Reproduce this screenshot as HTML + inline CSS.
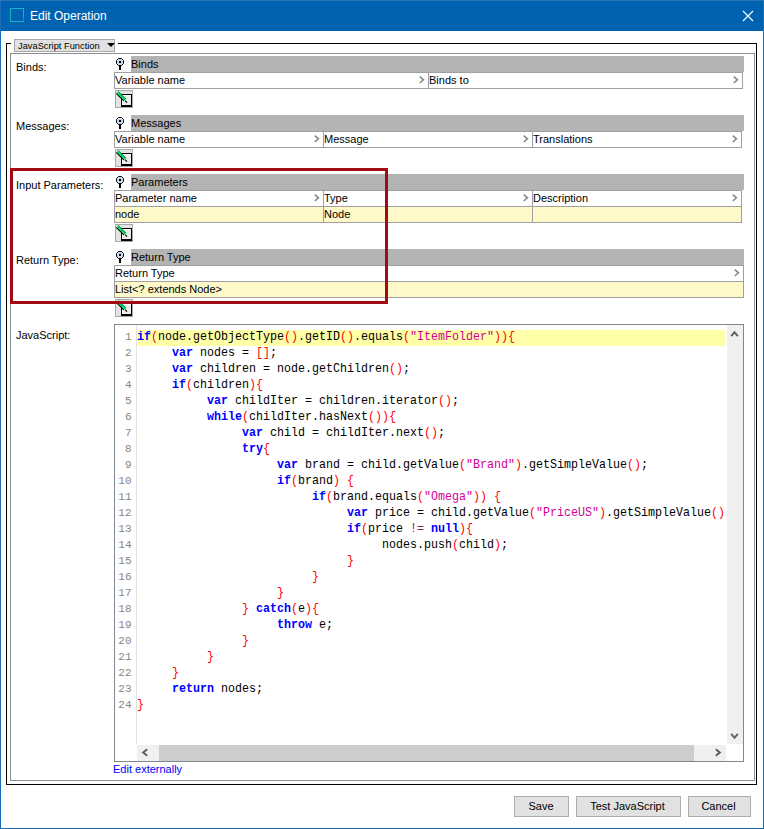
<!DOCTYPE html><html><head><meta charset="utf-8"><style>
html,body{margin:0;padding:0;}
body{width:764px;height:829px;position:relative;overflow:hidden;background:#fff;font-family:'Liberation Sans', sans-serif;}
.b{position:absolute;box-sizing:border-box;}
.t{position:absolute;font-family:'Liberation Sans', sans-serif;font-size:11px;line-height:11px;white-space:pre;}
.code{position:absolute;font-family:'Liberation Mono', monospace;font-size:12.8px;transform:scaleX(0.9115);transform-origin:0 0;line-height:16px;white-space:pre;color:#000;}
.k{color:#0000ff;font-weight:bold;}
.p{color:#ff0000;}
.s{color:#d2009a;}
.o{color:#902030;}
.ln{position:absolute;font-family:'Liberation Mono', monospace;font-size:11px;line-height:16px;color:#858585;text-align:right;width:40px;}
</style></head><body>
<div class="b" style="left:0px;top:0px;width:764px;height:31px;background:#0063b1;"></div><div class="b" style="left:0px;top:0px;width:764px;height:829px;border:1px solid #1a6cb6;border-top:none;"></div><div class="b" style="left:0px;top:0px;width:764px;height:1px;background:#2a74b8;"></div><div class="b" style="left:10px;top:8px;width:14px;height:14px;border:1px solid #14b4c4;"></div><div class="b" style="left:23px;top:18px;width:1px;height:1px;background:#0063b1;"></div><div class="b" style="left:23px;top:20px;width:1px;height:1px;background:#0063b1;"></div><div class="b" style="left:30px;top:8px;font-size:12px;letter-spacing:0px;line-height:16px;color:#fff;font-family:'Liberation Sans', sans-serif;white-space:pre">Edit Operation</div><svg class="b" style="left:742px;top:9.5px" width="12" height="12"><path d="M1,1L11,11M11,1L1,11" stroke="#fff" stroke-width="1.1"/></svg><div class="b" style="left:6px;top:43px;width:751px;height:742px;border:1px solid #000;"></div><div class="b" style="left:10px;top:53px;width:745px;height:728px;border:1px solid #8a8f98;"></div><div class="b" style="left:11px;top:38px;width:107px;height:15px;background:#fff;"></div><div class="b" style="left:10px;top:53px;width:108px;height:1px;background:#8a8f98;"></div><div class="b" style="left:14px;top:39px;width:101px;height:13px;background:#e1e1e1;border:1px solid #a8a8a8;"></div><div class="b" style="left:18px;top:41px;font-size:9.3px;line-height:11px;color:#000;font-family:'Liberation Sans', sans-serif;white-space:pre">JavaScript Function</div><svg class="b" style="left:107px;top:43px" width="8" height="4"><path d="M0,0H8L4,4z" fill="#000"/></svg><div class="t" style="left:16px;top:62px;color:#000;">Binds:</div><svg class="b" style="left:116px;top:58px" width="8" height="12"><path d="M2.5,0.5h3l2,2v3l-2,2h-3l-2,-2v-3z" fill="#c9d9ea" stroke="#000"/><rect x="3" y="3" width="2" height="2" fill="#000"/><rect x="3" y="7" width="2" height="5" fill="#000"/></svg><div class="b" style="left:131px;top:56px;width:613px;height:16px;background:#b4b4b4;"></div><div class="t" style="left:131px;top:59px;color:#000;">Binds</div><div class="b" style="left:114px;top:72px;width:629px;height:17px;border:1px solid #a0a0a0;"></div><div class="t" style="left:115px;top:75px;color:#000;">Variable name</div><svg class="b" style="left:419px;top:76px" width="6" height="8"><polyline points="0.8,0.6 4.4,3.8 0.8,7.0" fill="none" stroke="#888" stroke-width="1.6"/></svg><div class="b" style="left:428px;top:72px;width:1px;height:17px;background:#a0a0a0;"></div><div class="t" style="left:429px;top:75px;color:#000;">Binds to</div><svg class="b" style="left:733px;top:76px" width="6" height="8"><polyline points="0.8,0.6 4.4,3.8 0.8,7.0" fill="none" stroke="#888" stroke-width="1.6"/></svg><svg class="b" style="left:115px;top:90px" width="18" height="18"><rect x="0.5" y="0.5" width="17" height="17" fill="#e3e3e3" stroke="#a9a9a9"/><rect x="6" y="4" width="11" height="13" fill="#000"/><rect x="7" y="5" width="9" height="10" fill="#ececec"/><rect x="7" y="5" width="9" height="1" fill="#fff"/><rect x="7" y="5" width="1" height="10" fill="#fff"/><path d="M1.3,3.3 L8.8,10.8" stroke="#000" stroke-width="1.2"/><path d="M2.4,2.4 L10.4,10.0" stroke="#00d060" stroke-width="2.2"/><path d="M3.4,1.4 L11.2,9.0" stroke="#00802a" stroke-width="0.8"/><path d="M10.2,10.8 L12,12.6" stroke="#111" stroke-width="1.3"/></svg><div class="t" style="left:16px;top:121px;color:#000;">Messages:</div><svg class="b" style="left:116px;top:117px" width="8" height="12"><path d="M2.5,0.5h3l2,2v3l-2,2h-3l-2,-2v-3z" fill="#c9d9ea" stroke="#000"/><rect x="3" y="3" width="2" height="2" fill="#000"/><rect x="3" y="7" width="2" height="5" fill="#000"/></svg><div class="b" style="left:131px;top:115px;width:613px;height:16px;background:#b4b4b4;"></div><div class="t" style="left:131px;top:118px;color:#000;">Messages</div><div class="b" style="left:114px;top:131px;width:628px;height:17px;border:1px solid #a0a0a0;"></div><div class="t" style="left:115px;top:134px;color:#000;">Variable name</div><svg class="b" style="left:314px;top:135px" width="6" height="8"><polyline points="0.8,0.6 4.4,3.8 0.8,7.0" fill="none" stroke="#888" stroke-width="1.6"/></svg><div class="b" style="left:323px;top:131px;width:1px;height:17px;background:#a0a0a0;"></div><div class="t" style="left:324px;top:134px;color:#000;">Message</div><svg class="b" style="left:523px;top:135px" width="6" height="8"><polyline points="0.8,0.6 4.4,3.8 0.8,7.0" fill="none" stroke="#888" stroke-width="1.6"/></svg><div class="b" style="left:532px;top:131px;width:1px;height:17px;background:#a0a0a0;"></div><div class="t" style="left:533px;top:134px;color:#000;">Translations</div><svg class="b" style="left:732px;top:135px" width="6" height="8"><polyline points="0.8,0.6 4.4,3.8 0.8,7.0" fill="none" stroke="#888" stroke-width="1.6"/></svg><svg class="b" style="left:115px;top:149px" width="18" height="18"><rect x="0.5" y="0.5" width="17" height="17" fill="#e3e3e3" stroke="#a9a9a9"/><rect x="6" y="4" width="11" height="13" fill="#000"/><rect x="7" y="5" width="9" height="10" fill="#ececec"/><rect x="7" y="5" width="9" height="1" fill="#fff"/><rect x="7" y="5" width="1" height="10" fill="#fff"/><path d="M1.3,3.3 L8.8,10.8" stroke="#000" stroke-width="1.2"/><path d="M2.4,2.4 L10.4,10.0" stroke="#00d060" stroke-width="2.2"/><path d="M3.4,1.4 L11.2,9.0" stroke="#00802a" stroke-width="0.8"/><path d="M10.2,10.8 L12,12.6" stroke="#111" stroke-width="1.3"/></svg><div class="t" style="left:16px;top:180px;color:#000;">Input Parameters:</div><svg class="b" style="left:116px;top:176px" width="8" height="12"><path d="M2.5,0.5h3l2,2v3l-2,2h-3l-2,-2v-3z" fill="#c9d9ea" stroke="#000"/><rect x="3" y="3" width="2" height="2" fill="#000"/><rect x="3" y="7" width="2" height="5" fill="#000"/></svg><div class="b" style="left:131px;top:174px;width:613px;height:16px;background:#b4b4b4;"></div><div class="t" style="left:131px;top:177px;color:#000;">Parameters</div><div class="b" style="left:114px;top:190px;width:628px;height:33px;border:1px solid #a0a0a0;"></div><div class="b" style="left:115px;top:207px;width:626px;height:15px;background:#fff8c9;"></div><div class="b" style="left:114px;top:206px;width:628px;height:1px;background:#a0a0a0;"></div><div class="t" style="left:115px;top:193px;color:#000;">Parameter name</div><svg class="b" style="left:314px;top:194px" width="6" height="8"><polyline points="0.8,0.6 4.4,3.8 0.8,7.0" fill="none" stroke="#888" stroke-width="1.6"/></svg><div class="t" style="left:115px;top:209px;color:#000;">node</div><div class="b" style="left:323px;top:190px;width:1px;height:33px;background:#a0a0a0;"></div><div class="t" style="left:324px;top:193px;color:#000;">Type</div><svg class="b" style="left:523px;top:194px" width="6" height="8"><polyline points="0.8,0.6 4.4,3.8 0.8,7.0" fill="none" stroke="#888" stroke-width="1.6"/></svg><div class="t" style="left:324px;top:209px;color:#000;">Node</div><div class="b" style="left:532px;top:190px;width:1px;height:33px;background:#a0a0a0;"></div><div class="t" style="left:533px;top:193px;color:#000;">Description</div><svg class="b" style="left:732px;top:194px" width="6" height="8"><polyline points="0.8,0.6 4.4,3.8 0.8,7.0" fill="none" stroke="#888" stroke-width="1.6"/></svg><div class="t" style="left:533px;top:209px;color:#000;"></div><svg class="b" style="left:115px;top:224px" width="18" height="18"><rect x="0.5" y="0.5" width="17" height="17" fill="#e3e3e3" stroke="#a9a9a9"/><rect x="6" y="4" width="11" height="13" fill="#000"/><rect x="7" y="5" width="9" height="10" fill="#ececec"/><rect x="7" y="5" width="9" height="1" fill="#fff"/><rect x="7" y="5" width="1" height="10" fill="#fff"/><path d="M1.3,3.3 L8.8,10.8" stroke="#000" stroke-width="1.2"/><path d="M2.4,2.4 L10.4,10.0" stroke="#00d060" stroke-width="2.2"/><path d="M3.4,1.4 L11.2,9.0" stroke="#00802a" stroke-width="0.8"/><path d="M10.2,10.8 L12,12.6" stroke="#111" stroke-width="1.3"/></svg><div class="t" style="left:16px;top:255px;color:#000;">Return Type:</div><svg class="b" style="left:116px;top:251px" width="8" height="12"><path d="M2.5,0.5h3l2,2v3l-2,2h-3l-2,-2v-3z" fill="#c9d9ea" stroke="#000"/><rect x="3" y="3" width="2" height="2" fill="#000"/><rect x="3" y="7" width="2" height="5" fill="#000"/></svg><div class="b" style="left:131px;top:249px;width:613px;height:16px;background:#b4b4b4;"></div><div class="t" style="left:131px;top:252px;color:#000;">Return Type</div><div class="b" style="left:114px;top:265px;width:630px;height:33px;border:1px solid #a0a0a0;"></div><div class="b" style="left:115px;top:282px;width:628px;height:15px;background:#fff8c9;"></div><div class="b" style="left:114px;top:281px;width:630px;height:1px;background:#a0a0a0;"></div><div class="t" style="left:115px;top:268px;color:#000;">Return Type</div><svg class="b" style="left:734px;top:269px" width="6" height="8"><polyline points="0.8,0.6 4.4,3.8 0.8,7.0" fill="none" stroke="#888" stroke-width="1.6"/></svg><div class="t" style="left:115px;top:284px;color:#000;">List&lt;? extends Node&gt;</div><svg class="b" style="left:115px;top:299px" width="18" height="18"><rect x="0.5" y="0.5" width="17" height="17" fill="#e3e3e3" stroke="#a9a9a9"/><rect x="6" y="4" width="11" height="13" fill="#000"/><rect x="7" y="5" width="9" height="10" fill="#ececec"/><rect x="7" y="5" width="9" height="1" fill="#fff"/><rect x="7" y="5" width="1" height="10" fill="#fff"/><path d="M1.3,3.3 L8.8,10.8" stroke="#000" stroke-width="1.2"/><path d="M2.4,2.4 L10.4,10.0" stroke="#00d060" stroke-width="2.2"/><path d="M3.4,1.4 L11.2,9.0" stroke="#00802a" stroke-width="0.8"/><path d="M10.2,10.8 L12,12.6" stroke="#111" stroke-width="1.3"/></svg><div class="b" style="left:10px;top:168px;width:378px;height:136px;border:3px solid #a20b16;"></div><div class="t" style="left:16px;top:330px;color:#000;">JavaScript:</div><div class="b" style="left:114px;top:324px;width:630px;height:438px;border:1px solid #828790;"></div><div class="b" style="left:136px;top:325px;width:1px;height:419px;background:#e2e2e2;"></div><div class="b" style="left:137px;top:330px;width:589px;height:16px;background:#ffffa8;"></div><div class="b" style="left:137px;top:330px;width:589px;height:415px;overflow:hidden"><div class="code" style="left:0px;top:-1px"><span class="k">if</span><span class="p">(</span>node.getObjectType<span class="p">(</span><span class="p">)</span>.getID<span class="p">(</span><span class="p">)</span>.equals<span class="p">(</span><span class="s">&quot;ItemFolder&quot;</span><span class="p">)</span><span class="p">)</span><span class="p">{</span>
     <span class="k">var</span> nodes = <span class="p">[</span><span class="p">]</span>;
     <span class="k">var</span> children = node.getChildren<span class="p">(</span><span class="p">)</span>;
     <span class="k">if</span><span class="p">(</span>children<span class="p">)</span><span class="p">{</span>
          <span class="k">var</span> childIter = children.iterator<span class="p">(</span><span class="p">)</span>;
          <span class="k">while</span><span class="p">(</span>childIter.hasNext<span class="p">(</span><span class="p">)</span><span class="p">)</span><span class="p">{</span>
               <span class="k">var</span> child = childIter.next<span class="p">(</span><span class="p">)</span>;
               <span class="k">try</span><span class="p">{</span>
                    <span class="k">var</span> brand = child.getValue<span class="p">(</span><span class="s">&quot;Brand&quot;</span><span class="p">)</span>.getSimpleValue<span class="p">(</span><span class="p">)</span>;
                    <span class="k">if</span><span class="p">(</span>brand<span class="p">)</span> <span class="p">{</span>
                         <span class="k">if</span><span class="p">(</span>brand.equals<span class="p">(</span><span class="s">&quot;Omega&quot;</span><span class="p">)</span><span class="p">)</span> <span class="p">{</span>
                              <span class="k">var</span> price = child.getValue<span class="p">(</span><span class="s">&quot;PriceUS&quot;</span><span class="p">)</span>.getSimpleValue<span class="p">(</span><span class="p">)</span>;
                              <span class="k">if</span><span class="p">(</span>price <span class="o">!=</span> <span class="k">null</span><span class="p">)</span><span class="p">{</span>
                                   nodes.push<span class="p">(</span>child<span class="p">)</span>;
                              <span class="p">}</span>
                         <span class="p">}</span>
                    <span class="p">}</span>
               <span class="p">}</span> <span class="k">catch</span><span class="p">(</span>e<span class="p">)</span><span class="p">{</span>
                    <span class="k">throw</span> e;
               <span class="p">}</span>
          <span class="p">}</span>
     <span class="p">}</span>
     <span class="k">return</span> nodes;
<span class="p">}</span></div></div><div class="ln" style="left:91.5px;top:328.5px">1<br>2<br>3<br>4<br>5<br>6<br>7<br>8<br>9<br>10<br>11<br>12<br>13<br>14<br>15<br>16<br>17<br>18<br>19<br>20<br>21<br>22<br>23<br>24</div><div class="b" style="left:727px;top:325px;width:16px;height:419px;background:#f0f0f0;"></div><svg class="b" style="left:730px;top:330px" width="10" height="8"><polyline points="1.2,6.2 4.5,2.2 7.8,6.2" fill="none" stroke="#606060" stroke-width="2"/></svg><svg class="b" style="left:730px;top:732px" width="10" height="8"><polyline points="1.2,1.8 4.5,5.8 7.8,1.8" fill="none" stroke="#606060" stroke-width="2"/></svg><div class="b" style="left:137px;top:745px;width:589px;height:16px;background:#f0f0f0;"></div><div class="b" style="left:159px;top:745px;width:535px;height:16px;background:#cdcdcd;"></div><svg class="b" style="left:141px;top:748px" width="8" height="10"><polyline points="6.2,1.2 2.2,4.5 6.2,7.8" fill="none" stroke="#606060" stroke-width="2"/></svg><svg class="b" style="left:714px;top:748px" width="8" height="10"><polyline points="1.8,1.2 5.8,4.5 1.8,7.8" fill="none" stroke="#606060" stroke-width="2"/></svg><div class="t" style="left:113px;top:764px;color:#0000ff;">Edit externally</div><div class="b" style="left:514px;top:796px;width:55px;height:21px;background:#e1e1e1;border:1px solid #adadad;font-size:11px;line-height:19px;text-align:center;color:#000;white-space:pre;padding-right:1px;">Save</div><div class="b" style="left:576px;top:796px;width:105px;height:21px;background:#e1e1e1;border:1px solid #adadad;font-size:11px;line-height:19px;text-align:center;color:#000;white-space:pre;padding-right:2px;">Test JavaScript</div><div class="b" style="left:688px;top:796px;width:63px;height:21px;background:#e1e1e1;border:1px solid #adadad;font-size:11px;line-height:19px;text-align:center;color:#000;white-space:pre;padding-right:2px;">Cancel</div></body></html>
